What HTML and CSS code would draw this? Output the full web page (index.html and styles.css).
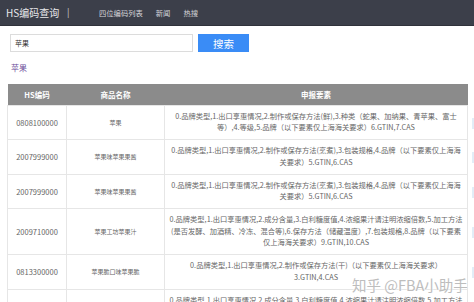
FILE: index.html
```html
<!DOCTYPE html>
<html lang="zh-CN">
<head>
    <meta charset="UTF-8">
    <meta name="viewport" content="width=device-width, initial-scale=1.0">
    <title>HS编码查询</title>
    <link rel="stylesheet" href="styles.css">
</head>
<body>
    <header class="topbar">
        <div class="logo">HS编码查询</div>
        <span class="sep">|</span>
        <nav class="nav">
            <a href="#">四位编码列表</a>
            <a href="#">新闻</a>
            <a href="#">热搜</a>
        </nav>
    </header>

    <div class="search-row">
        <input class="search-input" type="text" value="苹果">
        <button class="search-btn">搜索</button>
    </div>

    <a class="keyword" href="#">苹果</a>

    <table class="result">
        <thead>
            <tr>
                <th class="col-code">HS编码</th>
                <th class="col-name">商品名称</th>
                <th class="col-elem">申报要素</th>
                <th class="op"></th>
            </tr>
        </thead>
        <tbody>
            <tr>
                <td class="code">0808100000</td>
                <td class="name">苹果</td>
                <td class="elem">0.品牌类型,1.出口享惠情况,2.制作或保存方法(鲜),3.种类（蛇果、加纳果、青苹果、富士<br>等）,4.等级,5.品牌（以下要素仅上海海关要求）6.GTIN,7.CAS</td>
                <td class="op"><span class="op-btn"></span></td>
            </tr>
            <tr>
                <td class="code">2007999000</td>
                <td class="name">苹果味苹果果酱</td>
                <td class="elem">0.品牌类型,1.出口享惠情况,2.制作或保存方法(烹煮),3.包装规格,4.品牌（以下要素仅上海海<br>关要求）5.GTIN,6.CAS</td>
                <td class="op"><span class="op-btn"></span></td>
            </tr>
            <tr>
                <td class="code">2007999000</td>
                <td class="name">苹果味苹果果酱</td>
                <td class="elem">0.品牌类型,1.出口享惠情况,2.制作或保存方法(烹煮),3.包装规格,4.品牌（以下要素仅上海海<br>关要求）5.GTIN,6.CAS</td>
                <td class="op"><span class="op-btn"></span></td>
            </tr>
            <tr>
                <td class="code">2009710000</td>
                <td class="name">苹果工坊苹果汁</td>
                <td class="elem">0.品牌类型,1.出口享惠情况,2.成分含量,3.白利糖度值,4.浓缩果汁请注明浓缩倍数,5.加工方法<br>(是否发酵、加酒精、冷冻、混合等),6.保存方法（储藏温度）,7.包装规格,8.品牌（以下要素<br>仅上海海关要求）9.GTIN,10.CAS</td>
                <td class="op"><span class="op-btn"></span></td>
            </tr>
            <tr>
                <td class="code">0813300000</td>
                <td class="name">苹果脆口味苹果脆</td>
                <td class="elem">0.品牌类型,1.出口享惠情况,2.制作或保存方法(干)（以下要素仅上海海关要求）<br>3.GTIN,4.CAS</td>
                <td class="op"><span class="op-btn"></span></td>
            </tr>
            <tr>
                <td class="code">2009790000</td>
                <td class="name">苹果汁</td>
                <td class="elem">0.品牌类型,1.出口享惠情况,2.成分含量,3.白利糖度值,4.浓缩果汁请注明浓缩倍数,5.加工方法<br>(是否发酵、加酒精、冷冻、混合等),6.保存方法（储藏温度）,7.包装规格,8.品牌（以下要素<br>仅上海海关要求）9.GTIN,10.CAS</td>
                <td class="op"><span class="op-btn"></span></td>
            </tr>
        </tbody>
    </table>

    <div class="watermark">知乎 @FBA小助手</div>
</body>
</html>
```

FILE: styles.css
```css
* {
    margin: 0;
    padding: 0;
    box-sizing: border-box;
}

body {
    width: 474px;
    height: 302px;
    overflow: hidden;
    position: relative;
    background: #fff;
    font-family: "Noto Sans CJK SC", "Noto Sans", sans-serif;
    color: #666;
}

a {
    text-decoration: none;
}

/* top bar */
.topbar {
    height: 26px;
    display: flex;
    align-items: center;
    background: #3c3f4a;
    border-bottom: 1px solid #30323b;
}

.logo {
    width: 67px;
    padding-left: 6px;
    font-size: 10px;
    color: #e8e8ea;
}

.sep {
    width: 32px;
    font-size: 9px;
    color: #d0d0d4;
}

.nav {
    display: flex;
    gap: 13px;
}

.nav a {
    font-size: 7.3px;
    color: #d6d6da;
}

/* search */
.search-row {
    display: flex;
    gap: 5px;
    margin: 8px 0 0 10px;
}

.search-input {
    width: 183px;
    height: 18px;
    padding-left: 4px;
    border: 1px solid #dcdcdc;
    font-family: inherit;
    font-size: 7px;
    color: #333;
    outline: none;
}

.search-btn {
    width: 51px;
    height: 18px;
    border: none;
    background: #3a8cf6;
    color: #fff;
    font-family: inherit;
    font-size: 10.5px;
}

.keyword {
    display: block;
    margin: 9px 0 0 11px;
    height: 14px;
    line-height: 14px;
    font-size: 8px;
    color: #6b4c9a;
}

/* result table */
.result {
    margin: 9px 0 0 7px;
    border-collapse: collapse;
    table-layout: fixed;
    width: 500px;
}

.result th {
    height: 21px;
    background: #8b8b8b;
    color: #fff;
    font-size: 7.5px;
    font-weight: bold;
    text-align: center;
}

.result td {
    border: 1px solid #e6e6e6;
    text-align: center;
    vertical-align: middle;
    padding: 5.25px 0;
    line-height: 11.5px;
    white-space: nowrap;
}

.col-code {
    width: 59px;
}

.col-name {
    width: 98px;
}

.col-elem {
    width: 303px;
}

.result .op {
    width: 40px;
    background: none;
    border: none;
    padding: 0 0 0 4px;
    text-align: left;
}

.op-btn {
    display: inline-block;
    width: 30px;
    height: 11px;
    background: #e2edf7;
    vertical-align: middle;
}

.code {
    font-size: 7.5px;
    color: #666;
}

.name {
    font-size: 6px;
    color: #666;
}

.elem {
    font-size: 7.25px;
    color: #666;
}

.watermark {
    position: absolute;
    left: 352px;
    top: 274px;
    font-size: 14.5px;
    color: #bdbdbd;
    text-shadow: 0 0 2px #fff, 0 0 2px #fff;
    white-space: nowrap;
}
```
